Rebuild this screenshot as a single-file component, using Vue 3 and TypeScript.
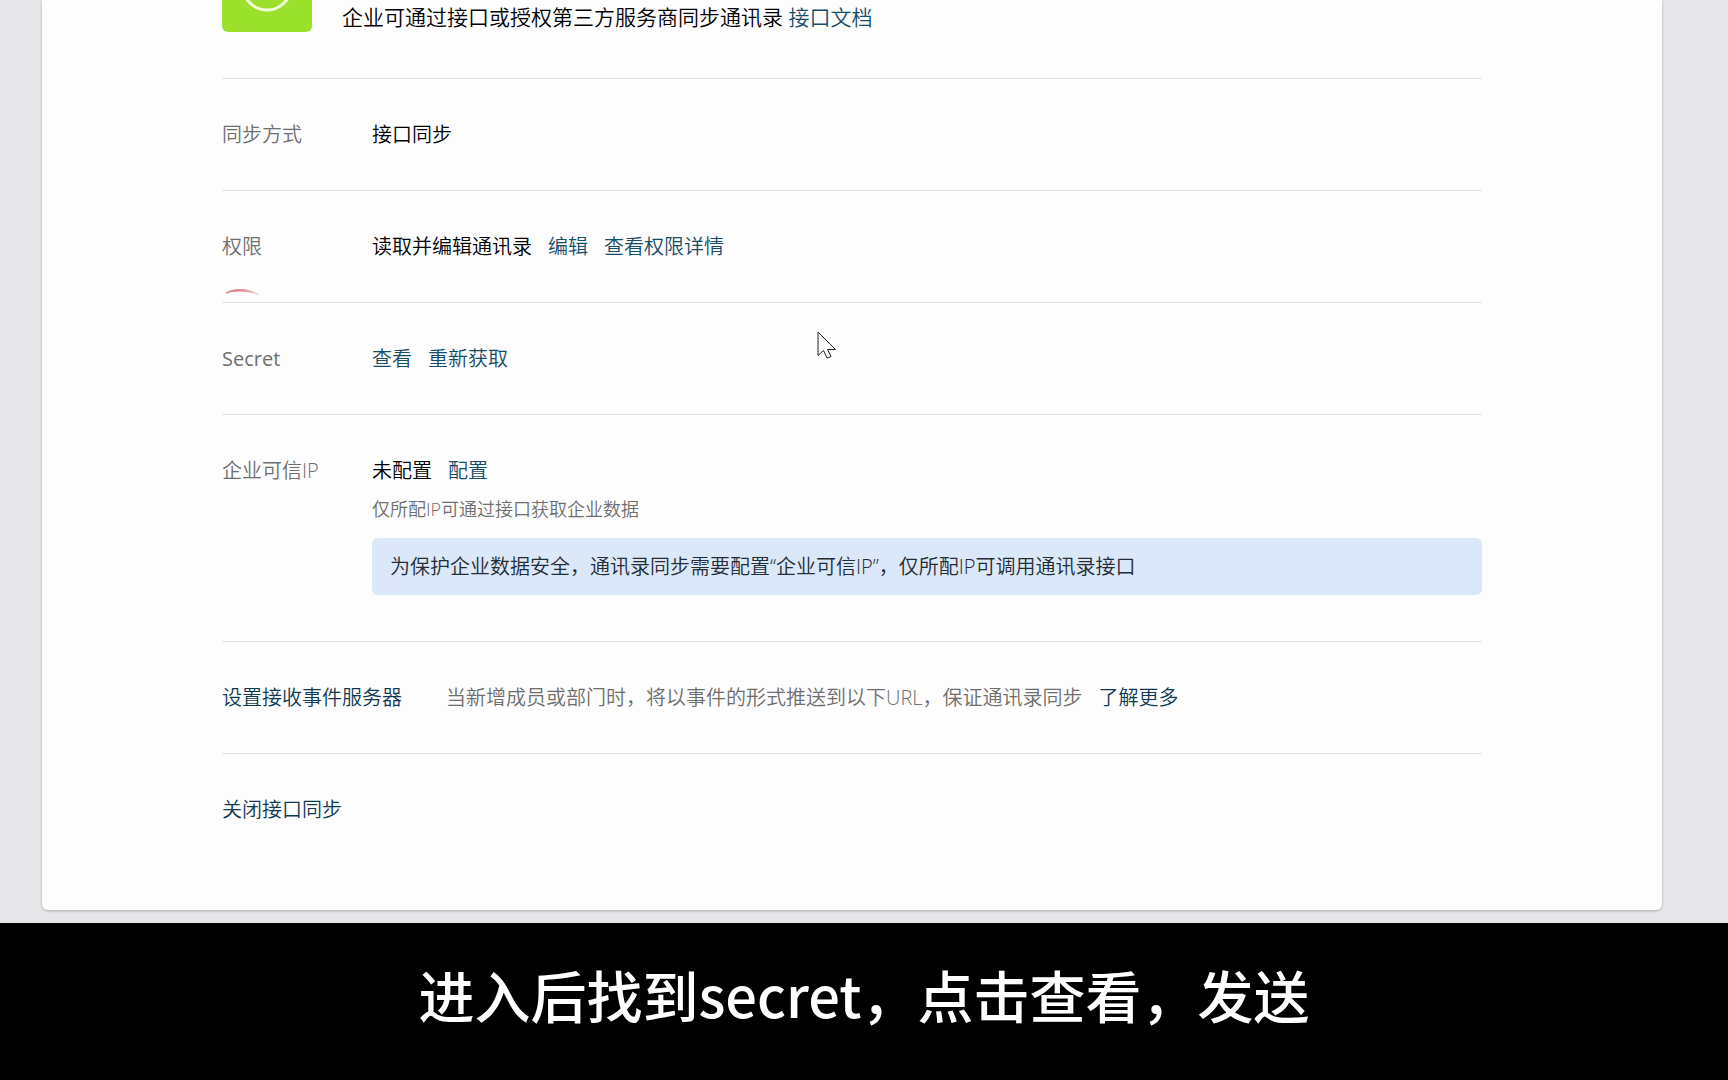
<script setup lang="ts">
interface Action {
  text: string
}

interface SettingRow {
  label: string
  latin?: boolean
  value?: string
  actions: Action[]
  hint?: string
  notice?: string
  marked?: boolean
}

const rows: SettingRow[] = [
  { label: '同步方式', value: '接口同步', actions: [] },
  {
    label: '权限',
    value: '读取并编辑通讯录',
    actions: [{ text: '编辑' }, { text: '查看权限详情' }],
    marked: true,
  },
  { label: 'Secret', latin: true, actions: [{ text: '查看' }, { text: '重新获取' }] },
  {
    label: '企业可信IP',
    value: '未配置',
    actions: [{ text: '配置' }],
    hint: '仅所配IP可通过接口获取企业数据',
    notice: '为保护企业数据安全，通讯录同步需要配置“企业可信IP”，仅所配IP可调用通讯录接口',
  },
]
</script>

<template>
  <div class="screen">
    <main class="page">
      <section class="card">
        <header class="intro">
          <svg class="app-icon" viewBox="0 0 90 32" aria-hidden="true">
            <path d="M0 0H90V26a6 6 0 0 1-6 6H6a6 6 0 0 1-6-6z" fill="#9ae02c" />
            <circle cx="45" cy="-14" r="24" fill="none" stroke="#f4ffe0" stroke-width="3" />
          </svg>
          <p class="intro-text">
            企业可通过接口或授权第三方服务商同步通讯录 <a href="#">接口文档</a>
          </p>
        </header>

        <div v-for="row in rows" :key="row.label" class="row">
          <div class="label" :class="{ latin: row.latin }">{{ row.label }}</div>
          <div class="content">
            <div class="line">
              <span v-if="row.value">{{ row.value }}</span>
              <a v-for="action in row.actions" :key="action.text" href="#">{{ action.text }}</a>
            </div>
            <p v-if="row.hint" class="hint">{{ row.hint }}</p>
            <p v-if="row.notice" class="notice">{{ row.notice }}</p>
          </div>
          <svg v-if="row.marked" class="mark" viewBox="0 0 36 10" aria-hidden="true">
            <defs>
              <linearGradient id="mark-fade" x1="0" x2="1" y1="0" y2="0">
                <stop offset="0" stop-color="#d98088" />
                <stop offset="0.5" stop-color="#dc8a92" />
                <stop offset="1" stop-color="#f3dcde" />
              </linearGradient>
            </defs>
            <path d="M1 5C9 0 24 0 34 7C24 2 10 2 1 5z" fill="url(#mark-fade)" stroke="url(#mark-fade)" />
          </svg>
        </div>

        <div class="row event">
          <a href="#" class="strong-link">设置接收事件服务器</a>
          <div class="line">
            <span class="muted">当新增成员或部门时，将以事件的形式推送到以下URL，保证通讯录同步</span>
            <a href="#" class="strong-link">了解更多</a>
          </div>
        </div>

        <div class="row">
          <a href="#" class="strong-link">关闭接口同步</a>
        </div>
      </section>

      <svg class="cursor" viewBox="0 0 20 28" aria-hidden="true">
        <path
          d="M1 1V24.500L6.500 19.500L10 27L14 25.500L10.500 18.500H18.500z"
          fill="#fff"
          stroke="#222"
          stroke-width="1"
        />
      </svg>
    </main>

    <p class="caption">进入后找到secret，点击查看，发送</p>
  </div>
</template>

<style>
body {
  margin: 0;
}
</style>

<style scoped>
.screen {
  display: flex;
  flex-direction: column;
  min-height: 100vh;
  background: #000;
  color: #000;
  font-family: "Open Sans", "Noto Sans CJK SC", sans-serif;
  font-size: 20px;
  font-weight: 350;
  line-height: 30px;
}

p {
  margin: 0;
}

a {
  color: #164c68;
  text-decoration: none;
}

.page {
  position: relative;
  padding: 0 66px 13px 42px;
  background: #e7e7e9;
}

.card {
  padding: 0 180px 45px;
  background: #fdfdfd;
  border-radius: 0 0 6px 6px;
  box-shadow: 0 1px 3px rgba(0, 0, 0, 0.25);
}

.intro {
  display: flex;
  gap: 30px;
  padding-bottom: 46px;
}

.app-icon {
  width: 90px;
  height: 32px;
}

.intro-text {
  font-size: 21px;
  line-height: 34px;
  height: 32px;
}

.row {
  position: relative;
  display: flex;
  padding: 41px 0 40px;
  border-top: 1px solid #e4e4e6;
}

.label {
  flex: 0 0 150px;
  color: #6e6e6e;
}

.latin {
  font-weight: 400;
}

.content {
  flex: 1;
}

.line {
  display: flex;
  gap: 16px;
}

.hint {
  margin-top: 10px;
  color: #6e6e6e;
  font-size: 18px;
  line-height: 26px;
}

.notice {
  margin: 16px 0 6px;
  padding: 14px 18px 13px;
  border-radius: 6px;
  background: #dbe8f9;
  color: #242c34;
}

.mark {
  position: absolute;
  left: 3px;
  bottom: 4px;
  width: 36px;
  height: 10px;
}

.event {
  gap: 44px;
}

.muted {
  color: #6e6e6e;
}

.strong-link {
  color: #0e3a56;
}

.cursor {
  position: absolute;
  top: 331px;
  left: 817px;
  width: 20px;
  height: 28px;
}

.caption {
  display: flex;
  flex: 1;
  align-items: center;
  justify-content: center;
  padding-bottom: 16px;
  color: #fff;
  font-family: "Noto Sans CJK SC", sans-serif;
  font-size: 56px;
  font-weight: 500;
  line-height: 80px;
}
</style>
